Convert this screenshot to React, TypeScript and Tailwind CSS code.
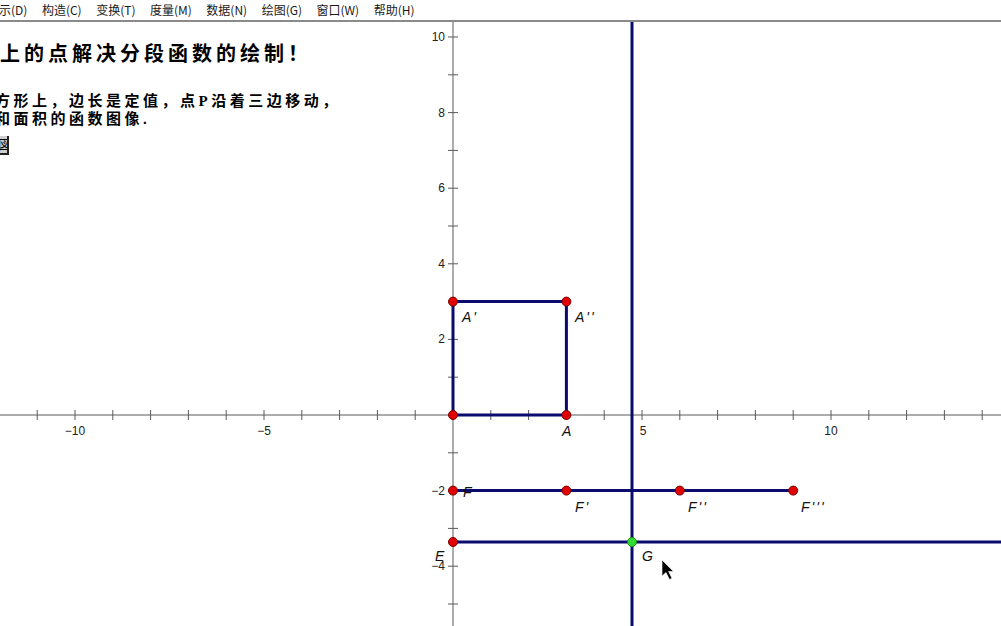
import React from 'react';

const OX = 453;
const OY = 415;
const U = 37.8;

const px = (x: number) => OX + x * U;
const py = (y: number) => OY - y * U;

const menuItems = ['示(D)', '构造(C)', '变换(T)', '度量(M)', '数据(N)', '绘图(G)', '窗口(W)', '帮助(H)'];

const NAVY = '#0b0b6e';

function Point({ x, y, green = false }: { x: number; y: number; green?: boolean }) {
  return (
    <circle
      cx={x}
      cy={y}
      r={4.5}
      fill={green ? '#2fdc2f' : '#e00000'}
      stroke={green ? '#1a8a1a' : '#7a0000'}
      strokeWidth={1}
    />
  );
}

function Label({ x, y, text }: { x: number; y: number; text: string }) {
  return (
    <text x={x} y={y} fontSize={14} fontStyle="italic" fill="#111" letterSpacing={2} fontFamily="'Liberation Sans', Arial, sans-serif">
      {text}
    </text>
  );
}

function Graph() {
  const xTicks: number[] = [];
  for (let i = -12; i <= 14; i++) if (i !== 0) xTicks.push(i);
  const yTicks: number[] = [];
  for (let i = -6; i <= 10; i++) if (i !== 0) yTicks.push(i);

  const yF = py(-2);
  const yE = 542;
  const xG = 632;

  return (
    <svg className="absolute inset-0" width={1001} height={604} viewBox="0 22 1001 604">
      {/* axes */}
      <line x1={0} y1={OY} x2={1001} y2={OY} stroke="#5a5a5a" strokeWidth={1} />
      <line x1={OX} y1={22} x2={OX} y2={626} stroke="#5a5a5a" strokeWidth={1} />
      {xTicks.map((i) => (
        <line key={'xt' + i} x1={px(i)} y1={OY - 5} x2={px(i)} y2={OY + 5} stroke="#5a5a5a" strokeWidth={1} />
      ))}
      {yTicks.map((i) => (
        <line key={'yt' + i} x1={OX - 5} y1={py(i)} x2={OX + 5} y2={py(i)} stroke="#5a5a5a" strokeWidth={1} />
      ))}
      <g fontSize={12} fill="#222" fontFamily="'Liberation Sans', Arial, sans-serif">
        {[-10, -5, 5, 10].map((v) => (
          <text key={'xl' + v} x={px(v) + (v === 5 ? 1 : 0)} y={OY + 20} textAnchor="middle">
            {v < 0 ? '\u2212' + Math.abs(v) : v}
          </text>
        ))}
        {[10, 8, 6, 4, 2, -2, -4].map((v) => (
          <text key={'yl' + v} x={OX - 8} y={py(v) + 4} textAnchor="end">
            {v < 0 ? '\u2212' + Math.abs(v) : v}
          </text>
        ))}
      </g>

      {/* constructions */}
      <polyline
        points={`${px(0)},${py(0)} ${px(3)},${py(0)} ${px(3)},${py(3)} ${px(0)},${py(3)} ${px(0)},${py(0)}`}
        fill="none"
        stroke={NAVY}
        strokeWidth={3}
      />
      <line x1={px(0)} y1={yF} x2={px(9)} y2={yF} stroke={NAVY} strokeWidth={3} />
      <line x1={px(0)} y1={yE} x2={1001} y2={yE} stroke={NAVY} strokeWidth={3} />
      <line x1={xG} y1={22} x2={xG} y2={626} stroke={NAVY} strokeWidth={3} />

      <Point x={px(0)} y={py(0)} />
      <Point x={px(3)} y={py(0)} />
      <Point x={px(0)} y={py(3)} />
      <Point x={px(3)} y={py(3)} />
      <Point x={px(0)} y={yF} />
      <Point x={px(3)} y={yF} />
      <Point x={px(6)} y={yF} />
      <Point x={px(9)} y={yF} />
      <Point x={px(0)} y={yE} />
      <Point x={xG} y={yE} green />

      <Label x={462} y={322} text="A'" />
      <Label x={575} y={322} text="A''" />
      <Label x={562} y={436} text="A" />
      <Label x={463} y={497} text="F" />
      <Label x={575} y={512} text="F'" />
      <Label x={688} y={512} text="F''" />
      <Label x={801} y={512} text="F'''" />
      <Label x={435} y={561} text="E" />
      <Label x={642} y={561} text="G" />

      {/* mouse cursor */}
      <path d="M662 560 L662 576 L666 572.5 L669.5 579.5 L672 578.3 L668.6 571.5 L673.5 571.5 Z" fill="#000" stroke="#fff" strokeWidth={0.6} />
    </svg>
  );
}

export default function App() {
  return (
    <div className="w-[1001px] h-[626px] overflow-hidden bg-white flex flex-col" style={{ fontFamily: "'Noto Sans CJK SC', sans-serif" }}>
      {/* menu bar */}
      <div className="h-[22px] shrink-0 flex items-start bg-white border-b-2 border-b-[#8a8a8a]">
        <div className="flex items-center gap-[14.5px] h-[20px] text-[12px] text-[#1a1a1a] -ml-[1px]">
          {menuItems.map((m) => (
            <span key={m} className="leading-none">{m}</span>
          ))}
        </div>
      </div>

      {/* sketch canvas */}
      <div className="relative flex-1">
        <Graph />
        <div className="relative pt-[20px] font-bold text-black" style={{ fontFamily: "'Liberation Serif', 'Noto Sans CJK SC', serif" }}>
          <div className="text-[20px] leading-[24px] tracking-[4px]">上的点解决分段函数的绘制！</div>
          <div className="mt-[26px] -ml-[5px] text-[15px] leading-[18px] tracking-[3.5px]">
            <div>方形上，边长是定值，点P沿着三边移动，</div>
            <div>和面积的函数图像.</div>
          </div>
          <div className="mt-[8px] w-[9px] h-[19px] overflow-hidden bg-[#cfcfcf] border-r-2 border-b-2 border-r-[#222] border-b-[#222] flex items-center justify-end">
            <span className="text-[13px] leading-none font-normal -mr-[4px]">図</span>
          </div>
        </div>
      </div>
    </div>
  );
}
